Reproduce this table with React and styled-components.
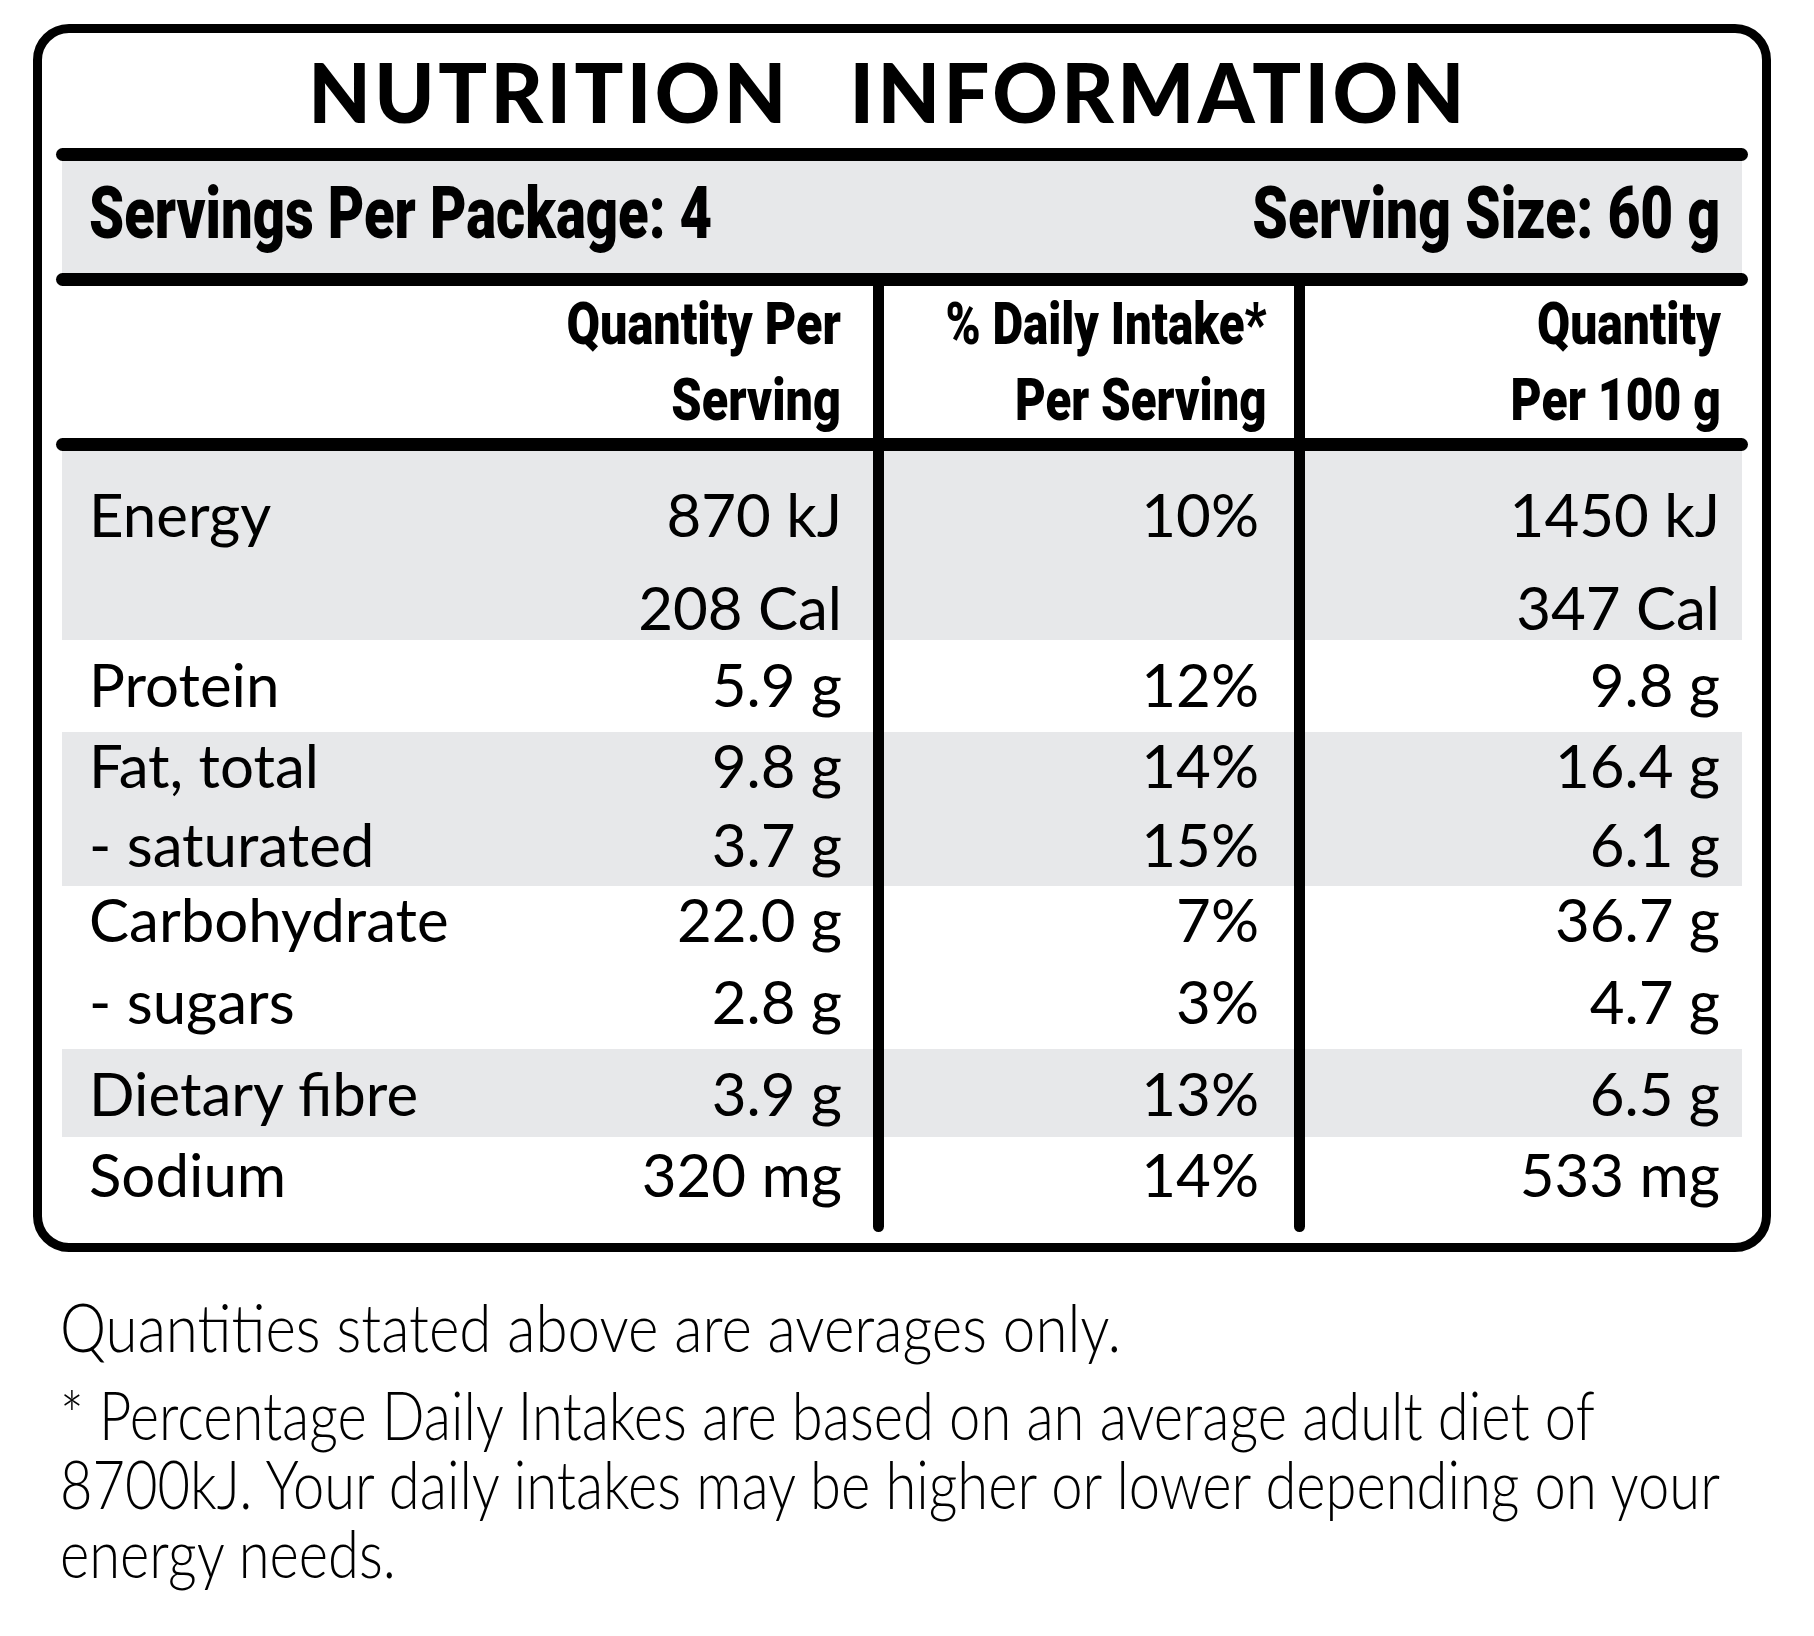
import React from 'react';
import styled, { createGlobalStyle } from 'styled-components';

const GlobalStyle = createGlobalStyle`
  body {
    margin: 0;
    background: #fff;
    color: #000;
  }
`;

const COLUMNS = '811px 11px 410px 11px 437px';
const SHADE = '#e7e8ea';

const Page = styled.div`
  display: flex;
  flex-direction: column;
  align-items: flex-start;
  padding: 24px 0 40px 33px;
`;

const Panel = styled.section`
  width: 1738px;
  box-sizing: border-box;
  border: 9px solid #000;
  border-radius: 36px;
  padding: 18px 20px 11px;
`;

const Title = styled.h1`
  margin: 0 0 16px;
  font-family: Lato, "Liberation Sans", sans-serif;
  font-weight: 900;
  font-size: 81px;
  line-height: 81px;
  letter-spacing: 3.4px;
  word-spacing: 37px;
  text-align: center;
  padding-right: 28px;
  white-space: nowrap;
`;

const Rule = styled.div`
  height: 13px;
  margin: 0 -6px;
  background: #000;
  border-radius: 7px;
`;

// Futura condensed look: narrow the installed face horizontally
const Condensed = styled.span`
  display: inline-block;
  white-space: nowrap;
  transform: scaleX(${p => p.$scale || 0.72});
  transform-origin: ${p => p.$origin || 'left'} center;
`;

const ServingBand = styled.div`
  display: flex;
  justify-content: space-between;
  background: ${SHADE};
  padding: 0 22px 6px 27px;
  height: 106px;
  font-family: Roboto, "Liberation Sans", sans-serif;
  font-weight: 900;
  font-size: 72px;
  line-height: 106px;
`;

const HeaderRow = styled.div`
  display: grid;
  grid-template-columns: ${COLUMNS};
  height: 152px;
`;

const HeadCell = styled.div`
  display: flex;
  justify-content: flex-end;
  min-width: 0;
  text-align: right;
  padding-right: ${p => p.$pr}px;
  font-family: Roboto, "Liberation Sans", sans-serif;
  font-weight: 900;
  font-size: 60px;
  line-height: 76px;
`;

const Divider = styled.div`
  background: #000;
  border-radius: ${p => (p.$end ? '0 0 6px 6px' : '0')};
`;

const Group = styled.div`
  display: grid;
  grid-template-columns: ${COLUMNS};
  background: ${p => (p.$shade ? SHADE : '#fff')};
`;

const Stack = styled.div`
  display: flex;
  flex-direction: column;
  gap: ${p => p.$gap}px;
  padding: ${p => p.$pt}px ${p => p.$pr}px ${p => p.$pb}px ${p => p.$pl || 0}px;
`;

const Line = styled.div`
  display: flex;
  justify-content: ${p => (p.$split ? 'space-between' : 'flex-end')};
  height: 66px;
  font-family: Lato, "Liberation Sans", sans-serif;
  font-weight: 400;
  font-size: 60px;
  line-height: 66px;
  white-space: nowrap;
`;

const Notes = styled.div`
  width: 1700px;
  margin: 40px 0 0 27px;
  display: flex;
  flex-direction: column;
  gap: 19px;
`;

const Note = styled.p`
  margin: 0;
  font-family: Lato, "Liberation Sans", sans-serif;
  font-weight: 300;
  font-size: 67px;
  line-height: 69px;
`;

const NoteLine = styled.div`
  height: 69px;
`;

const rows = [
  { shade: true, pt: 30, gap: 27, pb: 0, lines: [['Energy', '870 kJ', '10%', '1450 kJ'], ['', '208 Cal', '', '347 Cal']] },
  { shade: false, pt: 11, gap: 0, pb: 15, lines: [['Protein', '5.9 g', '12%', '9.8 g']] },
  { shade: true, pt: 0, gap: 13, pb: 9, lines: [['Fat, total', '9.8 g', '14%', '16.4 g'], ['- saturated', '3.7 g', '15%', '6.1 g']] },
  { shade: false, pt: 0, gap: 16, pb: 15, lines: [['Carbohydrate', '22.0 g', '7%', '36.7 g'], ['- sugars', '2.8 g', '3%', '4.7 g']] },
  { shade: true, pt: 11, gap: 0, pb: 11, lines: [['Dietary fibre', '3.9 g', '13%', '6.5 g']] },
  { shade: false, pt: 4, gap: 0, pb: 25, lines: [['Sodium', '320 mg', '14%', '533 mg']] },
];

const NutritionRow = ({ row, last }) => (
  <Group $shade={row.shade}>
    <Stack $pt={row.pt} $gap={row.gap} $pb={row.pb} $pl={27} $pr={31}>
      {row.lines.map((l, i) => (
        <Line key={i} $split>
          <span>{l[0]}</span>
          <span>{l[1]}</span>
        </Line>
      ))}
    </Stack>
    <Divider $end={last} />
    <Stack $pt={row.pt} $gap={row.gap} $pb={row.pb} $pr={35}>
      {row.lines.map((l, i) => (
        <Line key={i}>{l[2]}</Line>
      ))}
    </Stack>
    <Divider $end={last} />
    <Stack $pt={row.pt} $gap={row.gap} $pb={row.pb} $pr={22}>
      {row.lines.map((l, i) => (
        <Line key={i}>{l[3]}</Line>
      ))}
    </Stack>
  </Group>
);

const App = () => {
  return (
    <Page>
      <GlobalStyle />
      <Panel>
        <Title>NUTRITION INFORMATION</Title>
        <Rule />
        <ServingBand>
          <Condensed $origin="left" $scale={0.78}>Servings Per Package: 4</Condensed>
          <Condensed $origin="right" $scale={0.79}>Serving Size: 60 g</Condensed>
        </ServingBand>
        <Rule />
        <HeaderRow>
          <HeadCell $pr={32}>
            <Condensed $origin="right" $scale={0.81}>Quantity Per<br />Serving</Condensed>
          </HeadCell>
          <Divider />
          <HeadCell $pr={27}>
            <Condensed $origin="right" $scale={0.79}>% Daily Intake*<br />Per Serving</Condensed>
          </HeadCell>
          <Divider />
          <HeadCell $pr={21}>
            <Condensed $origin="right" $scale={0.8}>Quantity<br />Per 100 g</Condensed>
          </HeadCell>
        </HeaderRow>
        <Rule />
        {rows.map((row, i) => (
          <NutritionRow key={i} row={row} last={i === rows.length - 1} />
        ))}
      </Panel>
      <Notes>
        <Note>
          <Condensed $scale={0.87}>Quantities stated above are averages only.</Condensed>
        </Note>
        <Note>
          <NoteLine><Condensed $scale={0.837}>* Percentage Daily Intakes are based on an average adult diet of</Condensed></NoteLine>
          <NoteLine><Condensed $scale={0.837}>8700kJ. Your daily intakes may be higher or lower depending on your</Condensed></NoteLine>
          <NoteLine><Condensed $scale={0.837}>energy needs.</Condensed></NoteLine>
        </Note>
      </Notes>
    </Page>
  );
};

export default App;
